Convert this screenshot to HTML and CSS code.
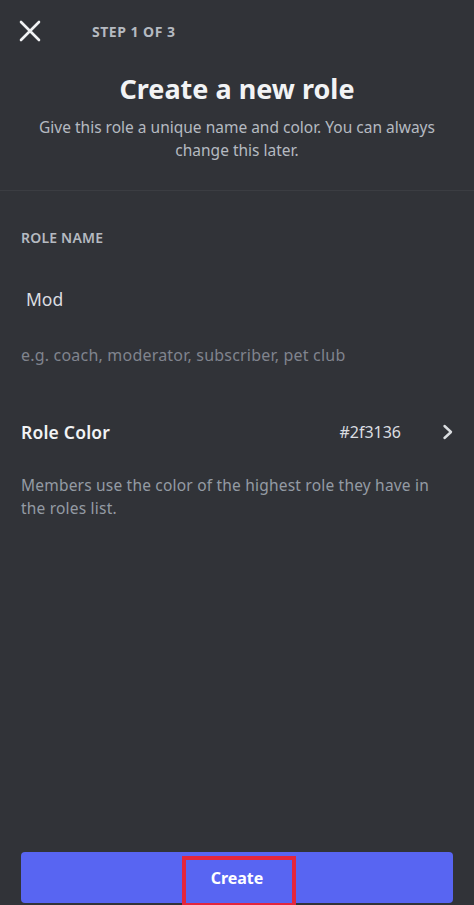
FILE: index.html
```html
<!DOCTYPE html>
<html lang="en">
<head>
<meta charset="utf-8">
<title>Create a new role</title>
<link rel="stylesheet" href="styles.css">
</head>
<body>
<div class="screen">
  <header class="topbar">
    <button class="close" aria-label="Close">
      <svg width="22" height="22" viewBox="0 0 22 22"><path d="M2 2 L20 20 M20 2 L2 20" stroke="#f2f3f5" stroke-width="2.6" stroke-linecap="round" fill="none"/></svg>
    </button>
    <span class="step">STEP 1 OF 3</span>
  </header>
  <section class="intro">
    <h1 class="title">Create a new role</h1>
    <p class="subtitle">Give this role a unique name and color. You can always change this later.</p>
  </section>
  <div class="divider"></div>
  <section class="form">
    <div class="label">ROLE NAME</div>
    <div class="value">Mod</div>
    <div class="placeholder">e.g. coach, moderator, subscriber, pet club</div>
    <div class="color-row">
      <span class="color-label">Role Color</span>
      <span class="color-value">#2f3136</span>
      <svg class="chev" width="12" height="16" viewBox="0 0 12 16"><path d="M2.5 2 L9 8 L2.5 14" stroke="#dbdee1" stroke-width="2.4" stroke-linecap="round" stroke-linejoin="round" fill="none"/></svg>
    </div>
    <p class="desc">Members use the color of the highest role they have in the roles list.</p>
  </section>
  <div class="spacer"></div>
  <footer class="footer">
    <button class="create"><span class="create-text">Create</span><span class="highlight"></span></button>
  </footer>
</div>
</body>
</html>
```
FILE: styles.css
```css
html, body {
  margin: 0;
  padding: 0;
  background: #313338;
}
body {
  font-family: "Noto Sans", "Open Sans", sans-serif;
  color: #f2f3f5;
}
.screen {
  width: 474px;
  height: 905px;
  display: flex;
  flex-direction: column;
  overflow: hidden;
}
.topbar {
  display: flex;
  align-items: center;
  height: 62px;
  padding-left: 19px;
}
.close {
  background: none;
  border: 0;
  padding: 0;
  width: 22px;
  height: 22px;
  display: flex;
}
.step {
  margin-left: 51px;
  font-size: 14px;
  font-weight: 700;
  color: #b5bac1;
  letter-spacing: 0.5px;
}
.intro {
  text-align: center;
  padding: 0 30px;
}
.title {
  margin: 9px 0 0;
  font-size: 27px;
  font-weight: 700;
  line-height: 36px;
  color: #f2f3f5;
}
.subtitle {
  margin: 9px 0 0;
  font-size: 15.5px;
  line-height: 22.5px;
  color: #b5bac1;
}
.divider {
  margin-top: 29px;
  height: 1px;
  background: #3b3d42;
}
.form {
  padding: 0 21px;
}
.label {
  margin-top: 37px;
  font-size: 14px;
  font-weight: 600;
  color: #b5bac1;
  line-height: 20px;
  letter-spacing: 0.2px;
}
.value {
  margin-top: 39px;
  padding-left: 5px;
  font-size: 17.5px;
  line-height: 24px;
  color: #dbdee1;
}
.placeholder {
  margin-top: 33px;
  font-size: 16px;
  line-height: 22px;
  color: #80848e;
  letter-spacing: 0.2px;
}
.color-row {
  margin-top: 54px;
  display: flex;
  align-items: center;
  height: 24px;
}
.color-label {
  font-size: 17.5px;
  font-weight: 600;
  color: #f2f3f5;
  flex: 1;
  letter-spacing: 0.2px;
}
.color-value {
  font-size: 16px;
  color: #dbdee1;
  margin-right: 41px;
}
.chev {
  margin-right: -1px;
}
.desc {
  margin: 30px 0 0;
  max-width: 420px;
  font-size: 15.5px;
  line-height: 23px;
  letter-spacing: 0.2px;
  color: #949ba4;
}
.spacer {
  flex: 1;
}
.footer {
  padding: 0 21px 2px;
}
.create {
  position: relative;
  width: 100%;
  height: 51px;
  border: 0;
  border-radius: 4px;
  background: #5865f2;
  color: #ffffff;
  font-family: inherit;
  font-size: 16px;
  font-weight: 700;
  display: flex;
  align-items: center;
  justify-content: center;
  padding: 0;
}
.highlight {
  position: absolute;
  left: 161px;
  top: 4px;
  width: 114px;
  height: 51px;
  border: 4px solid #e4263c;
  box-sizing: border-box;
}
```
